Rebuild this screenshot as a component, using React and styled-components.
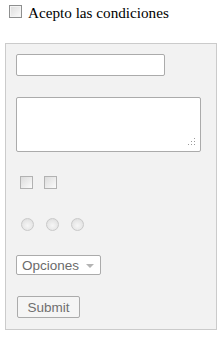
import React from "react";
import styled, { createGlobalStyle } from "styled-components";

const Global = createGlobalStyle`
  html, body { margin: 0; padding: 0; background: #fff; }
  * { box-sizing: border-box; }
`;

const Header = styled.label`
  display: flex;
  align-items: flex-start;
  height: 43px;
  padding: 5px 0 0 9px;
  font-family: "Liberation Serif", "Times New Roman", serif;
  font-size: 15.2px;
  line-height: 14px;
  color: #000;
`;

const HeaderText = styled.span`
  margin-left: 6px;
  margin-top: 1px;
`;

const Check = styled.input.attrs({ type: "checkbox" })`
  appearance: none;
  margin: 0;
  width: 13px;
  height: 13px;
  flex: none;
  border: 1px solid ${(p) => (p.$dark ? "#8e8f8f" : "#b2b2b2")};
  background: linear-gradient(135deg, #dcdcdc 0%, #fbfbfb 100%);
  box-shadow: inset 0 0 0 1px ${(p) => (p.$dark ? "#f4f4f4" : "transparent")};
`;

const Panel = styled.form`
  margin-left: 5px;
  width: 212px;
  border: 1px solid #cbcbcb;
  background: #f2f2f2;
  padding: 10px 10px 11px 10px;
  display: flex;
  flex-direction: column;
  align-items: flex-start;
`;

const TextInput = styled.input.attrs({ type: "text" })`
  width: 149px;
  height: 22px;
  margin: 0;
  border: 1px solid #ababab;
  border-radius: 2px;
  background: #fff;
  outline: none;
`;

const AreaWrap = styled.div`
  position: relative;
  margin-top: 21px;
  width: 185px;
  height: 55px;
`;

const Area = styled.textarea`
  display: block;
  width: 185px;
  height: 55px;
  margin: 0;
  border: 1px solid #ababab;
  border-radius: 2px;
  background: #fff;
  resize: none;
  outline: none;
`;

const Grip = styled.svg`
  position: absolute;
  right: 5px;
  bottom: 6px;
`;

const Row = styled.div`
  display: flex;
  gap: ${(p) => p.$gap}px;
  margin-top: ${(p) => p.$top}px;
  margin-left: ${(p) => p.$left}px;
`;

const Radio = styled.input.attrs({ type: "radio" })`
  appearance: none;
  margin: 0;
  width: 13px;
  height: 13px;
  border-radius: 50%;
  border: 1px solid #c9c9c9;
  background: radial-gradient(circle at 50% 60%, #f6f6f6 0%, #e6e6e6 60%, #d6d6d6 100%);
`;

const Select = styled.div`
  margin-top: 24px;
  width: 85px;
  height: 20px;
  border: 1px solid #ababab;
  border-radius: 2px;
  background: #fff;
  display: flex;
  align-items: center;
  padding-left: 5px;
  font-family: "Liberation Sans", Arial, sans-serif;
  font-size: 13.5px;
  color: #6b6b6b;
`;

const SelectText = styled.span`
  flex: 1;
`;

const Arrow = styled.span`
  width: 0;
  height: 0;
  border-left: 4px solid transparent;
  border-right: 4px solid transparent;
  border-top: 4px solid #b4b4b4;
  margin-right: 6px;
  margin-top: 1px;
`;

const Button = styled.button`
  margin: 21px 0 0 1px;
  width: 63px;
  height: 22px;
  border: 1px solid #ababab;
  border-radius: 2px;
  background: #f5f5f5;
  padding: 0;
  font-family: "Liberation Sans", Arial, sans-serif;
  font-size: 13.5px;
  color: #6f6f6f;
`;

export default function App() {
  const dots = [
    [7, 1], [7, 4], [7, 7],
    [4, 4], [4, 7],
    [1, 7],
  ];
  return (
    <>
      <Global />
      <Header>
        <Check $dark />
        <HeaderText>Acepto las condiciones</HeaderText>
      </Header>
      <Panel onSubmit={(e) => e.preventDefault()}>
        <TextInput />
        <AreaWrap>
          <Area />
          <Grip width="9" height="9" viewBox="0 0 9 9">
            {dots.map(([x, y], i) => (
              <rect key={i} x={x} y={y} width="1" height="1" fill="#9a9a9a" />
            ))}
          </Grip>
        </AreaWrap>
        <Row $gap={11} $top={24} $left={4}>
          <Check />
          <Check />
        </Row>
        <Row $gap={12} $top={29} $left={5}>
          <Radio name="r" />
          <Radio name="r" />
          <Radio name="r" />
        </Row>
        <Select>
          <SelectText>Opciones</SelectText>
          <Arrow />
        </Select>
        <Button type="submit">Submit</Button>
      </Panel>
    </>
  );
}
